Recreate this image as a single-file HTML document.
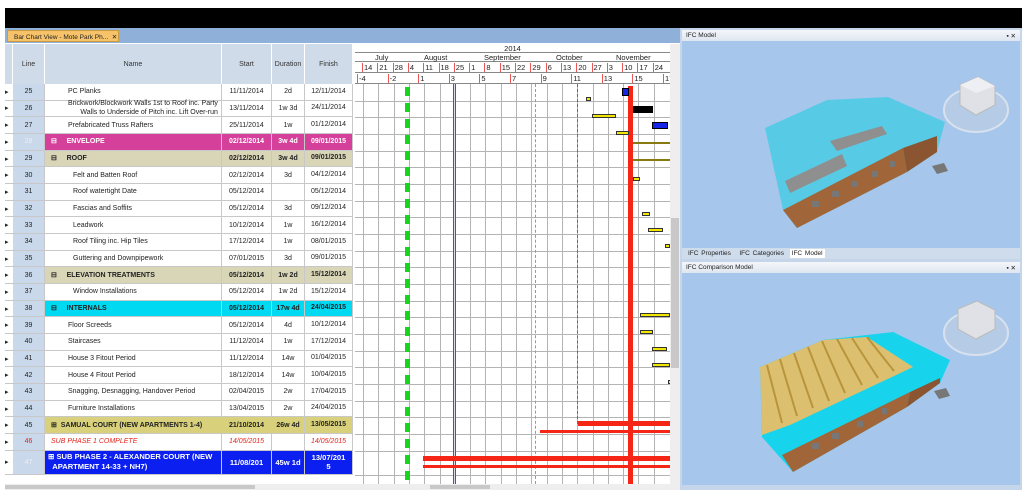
<!DOCTYPE html>
<html><head><meta charset="utf-8">
<style>
*{box-sizing:border-box;margin:0;padding:0}
body{width:1030px;height:495px;background:#fff;position:relative;overflow:hidden;font-family:"Liberation Sans",sans-serif;font-size:7px;color:#222}
.a{position:absolute}
.hc{position:absolute;top:44px;height:40px;background:#cfdbe9;border-right:1px solid #fff;display:flex;align-items:center;justify-content:center;font-size:7px;color:#333}
.row{position:absolute;left:5px;width:348px;border-bottom:1px solid #c8c8c8;background:#fff}
.c{position:absolute;top:0;height:100%;display:flex;align-items:center;border-right:1px solid #c8c8c8;font-size:7px}
.ln{left:8px;width:32px;background:#c9d8ea;justify-content:center}
.nm{left:40px;width:177px}
.st{left:217px;width:50px;justify-content:center}
.du{left:267px;width:33px;justify-content:center}
.fi{left:300px;width:48px;justify-content:center}
.gl{position:absolute;top:84px;height:400px;width:1px;background:#b4b4b4}
.hl{position:absolute;left:355px;width:315px;height:1px;background:#b4b4b4}
.yb{position:absolute;height:4px;background:#f2e600;border:1px solid #333}
</style></head><body>
<div class="a" style="left:5px;top:8px;width:1017px;height:20px;background:#000"></div>
<div class="a" style="left:5px;top:28px;width:675px;height:15px;background:#8fb0d9"></div>
<div class="a" style="left:7px;top:30px;width:112px;height:12px;background:#f7c36a;border:1px solid #c99a40;font-size:6.5px;padding:2px 0 0 6px">Bar Chart View - Mote Park Ph...&nbsp;&nbsp;✕</div>
<div class="a" style="left:5px;top:43px;width:675px;height:442px;background:#fff"></div>
<div class="hc" style="left:5px;width:8px"></div>
<div class="hc" style="left:13px;width:32px">Line</div>
<div class="hc" style="left:45px;width:177px">Name</div>
<div class="hc" style="left:222px;width:50px">Start</div>
<div class="hc" style="left:272px;width:33px">Duration</div>
<div class="hc" style="left:305px;width:48px">Finish</div>
<div id="rows"></div>
<div class="a" style="left:355px;top:44px;width:315px;height:40px;background:#fff;border-bottom:1px solid #888"></div>
<div class="a" style="left:355px;top:44px;width:315px;height:9px;text-align:center;font-size:7.5px;border-bottom:1px solid #888">2014</div>
<div class="a" style="left:355px;top:53px;width:315px;height:9px;border-bottom:1px solid #888"></div>
<div class="a" style="left:355px;top:62px;width:315px;height:11px;border-bottom:1px solid #888"></div>
<div id="g"></div>
<div class="a" style="left:670px;top:44px;width:10px;height:441px;background:#eee"></div>
<div class="a" style="left:671px;top:218px;width:8px;height:150px;background:#c8c8c8"></div>
<div class="a" style="left:5px;top:484px;width:675px;height:6px;background:#eee"></div>
<div class="a" style="left:5px;top:485px;width:250px;height:4px;background:#c8c8c8"></div>
<div class="a" style="left:430px;top:485px;width:60px;height:4px;background:#c8c8c8"></div>
<div class="a" style="left:680px;top:28px;width:342px;height:462px;background:#c6d6ea"></div>
<div class="a" style="left:682px;top:30px;width:338px;height:11px;background:linear-gradient(#f4f6fa,#dfe6f0);font-size:6.5px;padding:2px 4px">IFC Model<span style="float:right">▪ ✕</span></div>
<div class="a" style="left:682px;top:41px;width:338px;height:207px;background:#a7c6ec"></div>
<div class="a" style="left:682px;top:248px;width:338px;height:11px;background:#cfdcec;font-size:6.5px;padding:2px 6px;word-spacing:1px">IFC Properties &nbsp; IFC Categories &nbsp;<span style="background:#fff;padding:1px 2px">IFC Model</span></div>
<div class="a" style="left:682px;top:262px;width:338px;height:11px;background:linear-gradient(#f4f6fa,#dfe6f0);font-size:6.5px;padding:2px 4px">IFC Comparison Model<span style="float:right">▪ ✕</span></div>
<div class="a" style="left:682px;top:273px;width:338px;height:212px;background:#a7c6ec"></div>
<svg class="a" style="left:682px;top:41px" width="338" height="207">
<ellipse cx="294" cy="69" rx="32" ry="22" fill="#b5cbe6" stroke="#d8e2ee" stroke-width="2"/>
<polygon points="278,44 296,36 313,45 313,64 294,74 278,64" fill="#dfe1e6" stroke="#bbb"/>
<polygon points="278,44 296,36 313,45 294,52" fill="#eeeff2"/>
<polygon points="83,87 145,59 206,56 263,81 255,111 225,131 115,187 101,169" fill="#4fcbe4" opacity=".9"/>
<polygon points="101,169 221,107 225,131 115,187" fill="#a0663a"/>
<polygon points="221,107 255,95 255,111 225,131" fill="#8a5530"/>
<polygon points="103,140 160,113 165,125 108,152" fill="#8f8f8f"/>
<polygon points="148,100 200,85 205,93 155,110" fill="#8f8f8f"/>
<g fill="#777"><rect x="130" y="160" width="7" height="6"/><rect x="150" y="150" width="7" height="6"/><rect x="170" y="140" width="6" height="6"/><rect x="190" y="130" width="6" height="6"/><rect x="208" y="120" width="5" height="6"/></g>
<polygon points="250,125 262,122 266,130 255,133" fill="#777"/>
</svg>
<svg class="a" style="left:682px;top:273px" width="338" height="212">
<ellipse cx="294" cy="60" rx="32" ry="22" fill="#b5cbe6" stroke="#d8e2ee" stroke-width="2"/>
<polygon points="276,36 295,28 313,37 313,56 294,66 276,56" fill="#dfe1e6" stroke="#bbb"/>
<polygon points="78,94 141,67 211,59 268,87 258,110 225,134 111,199 80,164" fill="#17d4ec"/>
<polygon points="100,182 228,119 225,134 111,199" fill="#a0663a"/>
<polygon points="228,119 258,105 258,110 225,134" fill="#8a5530"/>
<polygon points="78,94 141,67 185,64 231,94 108,152 80,162" fill="#dcc070"/>
<g stroke="#b8943c" stroke-width="2">
<line x1="85" y1="92" x2="100" y2="150"/><line x1="98" y1="86" x2="115" y2="143"/><line x1="112" y1="80" x2="131" y2="135"/><line x1="126" y1="74" x2="147" y2="128"/><line x1="140" y1="68" x2="163" y2="120"/><line x1="155" y1="66" x2="180" y2="112"/><line x1="170" y1="65" x2="196" y2="105"/><line x1="185" y1="64" x2="212" y2="98"/>
</g>
<g fill="#777"><rect x="130" y="170" width="7" height="6"/><rect x="150" y="160" width="7" height="6"/><rect x="175" y="148" width="6" height="6"/><rect x="200" y="135" width="5" height="6"/></g>
<polygon points="252,118 264,115 268,123 257,126" fill="#777"/>
</svg>
<script>
var rows=[
["25","PC Planks","11/11/2014","2d","12/11/2014",0],
["26","Brickwork/Blockwork Walls 1st to Roof inc. Party<br>Walls to Underside of Pitch inc. Lift Over-run","13/11/2014","1w 3d","24/11/2014",0],
["27","Prefabricated Truss Rafters","25/11/2014","1w","01/12/2014",0],
["28","⊟ &nbsp; &nbsp; ENVELOPE","02/12/2014","3w 4d","09/01/2015",1],
["29","⊟ &nbsp; &nbsp; ROOF","02/12/2014","3w 4d","09/01/2015",2],
["30","Felt and Batten Roof","02/12/2014","3d","04/12/2014",0,1],
["31","Roof watertight Date","05/12/2014","","05/12/2014",0,1],
["32","Fascias and Soffits","05/12/2014","3d","09/12/2014",0,1],
["33","Leadwork","10/12/2014","1w","16/12/2014",0,1],
["34","Roof Tiling inc. Hip Tiles","17/12/2014","1w","08/01/2015",0,1],
["35","Guttering and Downpipework","07/01/2015","3d","09/01/2015",0,1],
["36","⊟ &nbsp; &nbsp; ELEVATION TREATMENTS","05/12/2014","1w 2d","15/12/2014",2],
["37","Window Installations","05/12/2014","1w 2d","15/12/2014",0,1],
["38","⊟ &nbsp; &nbsp; INTERNALS","05/12/2014","17w 4d","24/04/2015",3],
["39","Floor Screeds","05/12/2014","4d","10/12/2014",0],
["40","Staircases","11/12/2014","1w","17/12/2014",0],
["41","House 3 Fitout Period","11/12/2014","14w","01/04/2015",0],
["42","House 4 Fitout Period","18/12/2014","14w","10/04/2015",0],
["43","Snagging, Desnagging, Handover Period","02/04/2015","2w","17/04/2015",0],
["44","Furniture Installations","13/04/2015","2w","24/04/2015",0],
["45","⊞ &nbsp;SAMUAL COURT (NEW APARTMENTS 1-4)","21/10/2014","26w 4d","13/05/2015",4],
["46","SUB PHASE 1 COMPLETE","14/05/2015","","14/05/2015",5],
["47","⊞ SUB PHASE 2 - ALEXANDER COURT (NEW<br>&nbsp;&nbsp;APARTMENT 14-33 + NH7)","11/08/201","45w 1d","13/07/201<br>5",6]];
var bg=["#fff","#d5419a","#d9d6b8","#00d9f2","#d8d07a","#fff","#0a1ff0"];
var h="",y=84;
rows.forEach(function(r,i){var hh=i==22?24:16.67;var t=r[5];
var col=(t==1||t==6)?"#fff":(t==5?"#e3241b":"#222");var fw=t>0&&t!=5?"bold":"normal";var fs=t==5?"italic":"normal";
var pad=t==0?(r[6]?28:23):(t==6?3:6);var sz=t==6?"7.6px":"7px";
h+='<div class="row" style="top:'+y+'px;height:'+hh+'px"><div class="c" style="left:0;width:8px;border:none">▸</div>'+
'<div class="c ln" style="color:'+(t==1||t==6?"#eee":(t==5?"#e3241b":"#222"))+'">'+r[0]+'</div>'+
'<div style="position:absolute;left:40px;width:308px;top:0;height:100%;background:'+bg[t]+'"></div>'+
'<div class="c nm" style="padding-left:'+pad+'px;color:'+col+';font-weight:'+fw+';font-style:'+fs+';font-size:'+sz+';line-height:1.3;white-space:nowrap;text-align:'+(i==1?"right":"left")+'">'+r[1]+'</div>'+
'<div class="c st" style="color:'+col+';font-weight:'+fw+';font-style:'+fs+';font-size:'+sz+'">'+r[2]+'</div>'+
'<div class="c du" style="color:'+col+';font-weight:'+fw+';font-size:'+sz+'">'+r[3]+'</div>'+
'<div class="c fi" style="color:'+col+';font-weight:'+fw+';font-style:'+fs+';font-size:'+sz+';text-align:center;line-height:1.2">'+r[4]+'</div></div>';
y+=hh;});
document.getElementById("rows").innerHTML=h;
var g="";var wk=["14","21","28","4","11","18","25","1","8","15","22","29","6","13","20","27","3","10","17","24"];
for(var i=0;i<20;i++){var x=363+i*15.3;g+='<div class="gl" style="left:'+x+'px"></div>';
g+='<div class="a" style="left:'+(x-1)+'px;top:63px;font-size:7.5px;border-left:1px solid #e55;padding-left:1px;line-height:9px">'+wk[i]+'</div>';}
var nums=["-4","-2","1","3","5","7","9","11","13","15","17"];
for(var i=0;i<11;i++){var x=357+i*30.6;g+='<div class="a" style="left:'+x+'px;top:74px;font-size:7.5px;border-left:1px solid #e55;padding-left:1px;line-height:9px">'+nums[i]+'</div>';}
var mo=[["July",375],["August",424],["September",484],["October",556],["November",616]];
mo.forEach(function(m){g+='<div class="a" style="left:'+m[1]+'px;top:53px;font-size:7.5px;line-height:9px">'+m[0]+'</div>'});
var yy=84;for(var i=0;i<23;i++){yy+=(i==22?24:16.67);g+='<div class="hl" style="top:'+yy+'px"></div>';}
for(var i=0;i<25;i++)g+='<div class="a" style="left:405px;top:'+(87+i*16)+'px;width:5px;height:9px;background:#19d41c"></div>';
g+='<div class="a" style="left:453px;top:84px;width:3px;height:400px;border-left:1px solid #4050d0;border-right:1px solid #4050d0;background:#dde"></div>';
g+='<div class="a" style="left:535px;top:84px;height:400px;border-left:1px dashed #999"></div>';
g+='<div class="a" style="left:577px;top:84px;height:340px;border-left:1px dashed #e33"></div>';
g+='<div class="a" style="left:628px;top:86px;width:5px;height:398px;background:#f52616"></div>';
g+='<div class="a" style="left:622px;top:88px;width:7px;height:8px;background:#1526e8;border:1px solid #000"></div>';
g+='<div class="a" style="left:633px;top:106px;width:20px;height:7px;background:#000"></div>';
g+='<div class="a" style="left:652px;top:122px;width:16px;height:7px;background:#1526e8;border:1px solid #000"></div>';
g+='<div class="a" style="left:633px;top:142px;width:37px;height:2px;background:#887a10"></div>';
g+='<div class="a" style="left:633px;top:159px;width:37px;height:2px;background:#887a10"></div>';
var yb=[[586,97,5],[592,114,24],[616,131,13],[633,177,7],[642,212,8],[648,228,15],[665,244,5],[640,313,30],[640,330,13],[652,347,15],[652,363,18],[668,380,3]];
yb.forEach(function(b){g+='<div class="yb" style="left:'+b[0]+'px;top:'+b[1]+'px;width:'+b[2]+'px"></div>'});
g+='<div class="a" style="left:578px;top:421px;width:92px;height:5px;background:#f52616"></div>';
g+='<div class="a" style="left:540px;top:430px;width:130px;height:3px;background:#f52616"></div>';
g+='<div class="a" style="left:423px;top:456px;width:247px;height:5px;background:#f52616"></div>';
g+='<div class="a" style="left:423px;top:465px;width:247px;height:3px;background:#f52616"></div>';
document.getElementById("g").innerHTML=g;
</script>
</body></html>
